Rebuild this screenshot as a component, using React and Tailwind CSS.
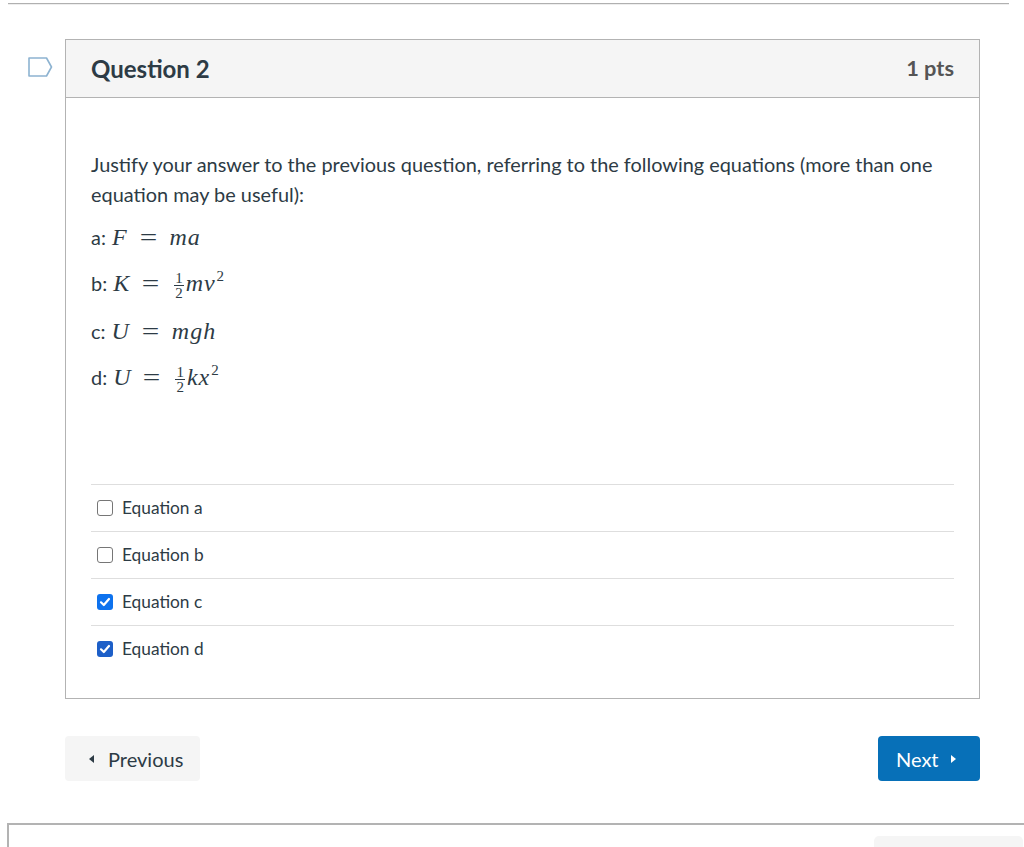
import React from "react";

const mathFont = { fontFamily: '"Liberation Serif", "DejaVu Serif", serif' };

function Frac({ num, den }) {
  return (
    <span
      className="inline-flex flex-col items-center align-middle mx-[2px] text-[15px] leading-[13px] not-italic"
      style={mathFont}
    >
      <span className="px-[1px]">{num}</span>
      <span className="border-t border-[#2d3b45] px-[1px] pt-[1px]">{den}</span>
    </span>
  );
}

function M({ children }) {
  return (
    <span className="italic text-[24px] tracking-[1px]" style={mathFont}>
      {children}
    </span>
  );
}

function Eq({ label, lhs, children }) {
  return (
    <div className="h-[47px] flex items-center">
      <div className="text-[19.9px] leading-[30px] text-[#2d3b45] whitespace-nowrap">
        <span>{label}:</span>
        <span className="ml-[6px]">
          <M>{lhs}</M>
        </span>
        <span className="inline-block ml-[14px] mr-[15px] text-[23px] scale-x-[1.35]" style={mathFont}>
          =
        </span>
        {children}
      </div>
    </div>
  );
}

function Sup({ children }) {
  return (
    <span className="not-italic text-[15px] relative -top-[10px] ml-[1px]" style={mathFont}>
      {children}
    </span>
  );
}

function Checkbox({ checked, color }) {
  if (checked) {
    return (
      <span
        className="w-[16px] h-[16px] rounded-[3px] flex items-center justify-center"
        style={{ backgroundColor: color }}
      >
        <svg width="12" height="12" viewBox="0 0 12 12">
          <path d="M2 6.3 L4.8 9 L10 3" fill="none" stroke="white" strokeWidth="2.2" strokeLinecap="round" strokeLinejoin="round" />
        </svg>
      </span>
    );
  }
  return <span className="w-[16px] h-[16px] rounded-[3px] border border-[#767676] bg-white" />;
}

function Answer({ label, checked, color }) {
  return (
    <div className="h-[47px] border-t border-[#dedede] flex items-center pl-[6px]">
      <Checkbox checked={checked} color={color} />
      <span className="ml-[9px] text-[17.3px] text-[#2d3b45]">{label}</span>
    </div>
  );
}

export default function App() {
  return (
    <div
      className="w-[1024px] h-[847px] overflow-hidden bg-white text-[#2d3b45]"
      style={{ fontFamily: 'Lato, "Open Sans", sans-serif' }}
    >
      <div className="ml-[8px] mt-[3px] w-[1001px] border-t border-[#b0b0b0]" />
      <div className="ml-[8px] w-[1001px] border-t border-[#eeeeee]" />

      <div className="flex mt-[34px]">
        <div className="w-[65px] flex justify-start pl-[28px] pt-[18px]">
          <svg width="25" height="20" viewBox="0 0 25 20">
            <path d="M1 1 H18.5 L23.5 10 L18.5 19 H1 Z" fill="none" stroke="#8db3d1" strokeWidth="1.6" strokeLinejoin="round" />
          </svg>
        </div>
        <div className="w-[915px] border border-[#b3b3b3]">
          <div className="h-[58px] bg-[#f5f5f5] border-b border-[#b3b3b3] flex items-center justify-between px-[25px]">
            <span className="text-[24px] font-bold text-[#2d3b45]">Question 2</span>
            <span className="text-[21.8px] font-bold text-[#555555]">1 pts</span>
          </div>
          <div className="px-[25px] pt-[51px] pb-[26px]">
            <p className="text-[19.9px] leading-[30px] text-[#2d3b45]">
              Justify your answer to the previous question, referring to the following equations (more than one
              equation may be useful):
            </p>
            <div className="mt-[5px]">
              <Eq label="a" lhs="F">
                <M>ma</M>
              </Eq>
              <Eq label="b" lhs="K">
                <Frac num="1" den="2" />
                <M>mv</M>
                <Sup>2</Sup>
              </Eq>
              <Eq label="c" lhs="U">
                <M>mgh</M>
              </Eq>
              <Eq label="d" lhs="U">
                <Frac num="1" den="2" />
                <M>kx</M>
                <Sup>2</Sup>
              </Eq>
            </div>
            <div className="mt-[82px]">
              <Answer label="Equation a" />
              <Answer label="Equation b" />
              <Answer label="Equation c" checked color="#0d72ee" />
              <Answer label="Equation d" checked color="#1d5fc8" />
            </div>
          </div>
        </div>
      </div>

      <div className="flex justify-between ml-[65px] w-[915px] mt-[37px]">
        <button className="h-[45px] w-[135px] bg-[#f5f5f5] rounded-[4px] flex items-center pl-[23px] text-[20px] text-[#2d3b45]">
          <svg width="7" height="10" viewBox="0 0 7 10" className="mr-[13px]">
            <path d="M6 1 L1 5 L6 9 Z" fill="#2d3b45" />
          </svg>
          Previous
        </button>
        <button className="h-[45px] w-[102px] bg-[#0770b8] rounded-[4px] flex items-center pl-[18px] text-[20px] text-white">
          Next
          <svg width="7" height="10" viewBox="0 0 7 10" className="ml-[11px]">
            <path d="M1 1 L6 5 L1 9 Z" fill="white" />
          </svg>
        </button>
      </div>

      <div className="ml-[7px] mt-[42px] h-[40px] border-t-2 border-l-2 border-[#b3b3b3] flex justify-end pt-[11px]">
        <div className="w-[149px] h-[30px] bg-[#f5f5f5] rounded-[5px] mr-[1px]" />
      </div>
    </div>
  );
}
